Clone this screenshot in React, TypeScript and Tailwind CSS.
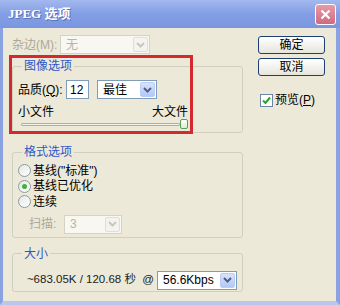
import { ReactNode } from 'react'

const FONT = { fontFamily: '"Liberation Sans", "Noto Sans CJK SC", sans-serif' }

function Arrow({ disabled }: { disabled?: boolean }) {
  return (
    <span
      className={`flex h-full w-[15px] items-center justify-center rounded-[2px] ${
        disabled ? 'bg-[#f4f3ee] border border-[#e0dfd6]' : 'bg-gradient-to-b from-[#d7e3fd] to-[#b4c8f6] border border-[#b9cdf8]'
      }`}
    >
      <svg width="9" height="6" viewBox="0 0 9 6">
        <path
          d="M1 1 L4.5 4.5 L8 1"
          fill="none"
          stroke={disabled ? '#c9c7ba' : '#4d6185'}
          strokeWidth="2"
        />
      </svg>
    </span>
  )
}

function Select({ value, width, disabled }: { value: string; width: string; disabled?: boolean }) {
  return (
    <div
      className={`flex h-[19px] items-center justify-between border p-[1px] ${width} ${
        disabled ? 'border-[#d5d3c6] bg-[#f8f7f2] text-[#b7b5a8]' : 'border-[#7f9db9] bg-white text-black'
      }`}
    >
      <span className="pl-[4px] text-[12px] leading-none">{value}</span>
      <Arrow disabled={disabled} />
    </div>
  )
}

function Group({ title, className, children }: { title: string; className?: string; children: ReactNode }) {
  return (
    <fieldset className={`w-[231px] rounded-[3px] border border-[#d0d0bf] px-[5px] ${className ?? ''}`}>
      <legend className="ml-[4px] px-[2px] text-[12px] leading-[14px] text-[#2f56c8]">{title}</legend>
      {children}
    </fieldset>
  )
}

function Radio({ label, checked }: { label: string; checked?: boolean }) {
  return (
    <div className="flex h-[15.5px] items-center gap-[2px]">
      <span className="flex h-[13px] w-[13px] items-center justify-center rounded-full border border-[#8b9aa8] bg-gradient-to-br from-[#e6e6e0] to-white">
        {checked && <span className="h-[5px] w-[5px] rounded-full bg-[#3fb13f]" />}
      </span>
      <span className="text-[12px] leading-none">{label}</span>
    </div>
  )
}

function Button({ label }: { label: string }) {
  return (
    <button className="flex h-[18px] w-[67px] items-center justify-center rounded-[3px] border border-[#1d3f73] bg-gradient-to-b from-white to-[#e6e5dd] text-[12px] leading-none text-black">
      {label}
    </button>
  )
}

export default function App() {
  return (
    <div className="flex h-[305px] w-[340px] flex-col overflow-hidden bg-[#ece9d8]" style={FONT}>
      {/* Title bar */}
      <div className="flex h-[28px] shrink-0 items-center justify-between bg-gradient-to-b from-[#a3b8ee] via-[#839ee4] to-[#7a96e0] pl-[8px] pr-[4px]">
        <span
          className="text-[13px] font-bold text-white"
          style={{ fontFamily: '"Liberation Serif", "Noto Sans CJK SC", serif', textShadow: '1px 1px 0 #5a72b8' }}
        >
          JPEG 选项
        </span>
        <span className="flex h-[21px] w-[21px] items-center justify-center rounded-[3px] border border-white bg-gradient-to-b from-[#e69aa8] to-[#d0697f]">
          <svg width="11" height="11" viewBox="0 0 11 11">
            <path d="M1.5 1.5 L9.5 9.5 M9.5 1.5 L1.5 9.5" stroke="white" strokeWidth="2.2" />
          </svg>
        </span>
      </div>

      {/* Body */}
      <div className="flex flex-1 border-b-[4px] border-l-[3px] border-r-[4px] border-b-[#bac6ea] border-l-[#8aa2e2] border-r-[#8aa2e2]">
        {/* Left column */}
        <div className="relative flex flex-col pl-[9px]">
          <div className="mt-[7px] flex h-[19px] items-center">
            <span className="w-[48px] text-[12px] text-[#aca899]">杂边(M):</span>
            <Select value="无" width="w-[90px]" disabled />
          </div>

          <Group title="图像选项" className="mt-[5px] pb-[3px]">
            <div className="flex w-[170px] flex-col">
              <div className="mt-[7px] flex h-[19px] items-center">
                <span className="w-[48px] text-[12px]">
                  品质(<span className="underline">Q</span>):
                </span>
                <div className="flex h-[19px] w-[23px] items-center border border-[#7f9db9] bg-white pl-[3px] text-[12px]">
                  12
                </div>
                <div className="ml-[8px]">
                  <Select value="最佳" width="w-[60px]" />
                </div>
              </div>
              <div className="mt-[6px] flex h-[14px] items-center justify-between text-[12px]">
                <span>小文件</span>
                <span>大文件</span>
              </div>
              <div className="flex h-[10px] items-center pl-[3px]">
                <div className="h-[3px] flex-1 rounded-[1px] border border-[#b0ae9f] bg-[#f3f2ea]" />
                <div className="h-[10px] w-[8px] rounded-[2px] border border-[#5aa05a] bg-gradient-to-b from-white to-[#d8eed0]" />
              </div>
            </div>
          </Group>

          <Group title="格式选项" className="mt-[12px] pb-[3px]">
            <div className="mt-[4px] flex flex-col pl-[-2px]">
              <Radio label={'基线("标准")'} />
              <Radio label="基线已优化" checked />
              <Radio label="连续" />
              <div className="mt-[5px] flex h-[19px] items-center pl-[11px]">
                <span className="w-[35px] text-[12px] text-[#aca899]">扫描:</span>
                <Select value="3" width="w-[58px]" disabled />
              </div>
            </div>
          </Group>

          <Group title="大小" className="mt-[9px] pb-[1px]">
            <div className="mt-[10px] flex h-[19px] items-center justify-end gap-[3px]">
              <span className="text-[11.5px] text-[#222]">~683.05K / 120.68 秒&nbsp;&nbsp;@</span>
              <Select value="56.6Kbps" width="w-[80px]" />
            </div>
          </Group>

          {/* Red highlight */}
          <div className="absolute left-[6px] top-[27px] h-[79px] w-[184px] border-[3px] border-[#d42a2e]" />
        </div>

        {/* Right column */}
        <div className="ml-[15px] flex flex-col">
          <div className="mt-[8px]">
            <Button label="确定" />
          </div>
          <div className="mt-[4px]">
            <Button label="取消" />
          </div>
          <div className="mt-[15px] flex items-center gap-[2px] pl-[2px]">
            <span className="flex h-[13px] w-[13px] items-center justify-center border border-[#6b84a8] bg-white">
              <svg width="9" height="9" viewBox="0 0 9 9">
                <path d="M1 4.5 L3.5 7 L8 1.5" fill="none" stroke="#2aa52a" strokeWidth="2" />
              </svg>
            </span>
            <span className="text-[12px]">
              预览(<span className="underline">P</span>)
            </span>
          </div>
        </div>
      </div>
    </div>
  )
}
